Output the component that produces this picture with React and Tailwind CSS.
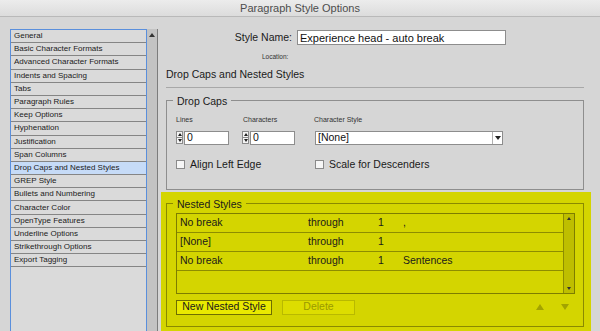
import React from 'react';

const SECTIONS = [
  'General',
  'Basic Character Formats',
  'Advanced Character Formats',
  'Indents and Spacing',
  'Tabs',
  'Paragraph Rules',
  'Keep Options',
  'Hyphenation',
  'Justification',
  'Span Columns',
  'Drop Caps and Nested Styles',
  'GREP Style',
  'Bullets and Numbering',
  'Character Color',
  'OpenType Features',
  'Underline Options',
  'Strikethrough Options',
  'Export Tagging',
];

const NESTED = [
  { style: 'No break', mode: 'through', count: '1', until: ',' },
  { style: '[None]', mode: 'through', count: '1', until: '' },
  { style: 'No break', mode: 'through', count: '1', until: 'Sentences' },
];

function Spinner() {
  return (
    <div className="flex h-[14px] items-center">
      <div className="flex h-[13px] w-[7px] flex-col items-center justify-between border border-[#8a8a8a] bg-[#f4f4f4] py-[1px]">
        <span className="h-0 w-0 border-x-[2.5px] border-b-[3px] border-x-transparent border-b-[#222]" />
        <span className="h-px w-full bg-[#8a8a8a]" />
        <span className="h-0 w-0 border-x-[2.5px] border-t-[3px] border-x-transparent border-t-[#222]" />
      </div>
      <div className="ml-[1px] flex h-[14px] w-[45px] items-center border border-[#8d8d8d] bg-white pl-[2px] text-[10.5px] text-[#111]">
        0
      </div>
    </div>
  );
}

function Checkbox({ label }) {
  return (
    <div className="flex items-center gap-[5px]">
      <span className="h-[9px] w-[9px] border border-[#8a8a8a] bg-[#f6f6f6]" />
      <span className="text-[10.5px] text-[#1a1a1a]">{label}</span>
    </div>
  );
}

export default function App() {
  return (
    <div
      className="h-[331px] w-[600px] overflow-hidden bg-[#d6d6d6] text-[#1a1a1a]"
      style={{ fontFamily: '"Liberation Sans", Arial, sans-serif' }}
    >
      <div className="flex h-[17px] items-center justify-center border-b border-[#b9b9b9] bg-gradient-to-b from-[#ececec] to-[#dcdcdc] text-[11px] text-[#4d4d4d]">
        Paragraph Style Options
      </div>

      <div className="flex items-start">
        {/* section list */}
        <div className="ml-[10px] mt-[12px] flex h-[320px]">
          <div className="w-[137px] border border-[#5a8fdc] bg-[#dadada]">
            {SECTIONS.map((s) => (
              <div
                key={s}
                className={`flex h-[13.2px] items-center border-b border-[#858585] pl-[3px] text-[8px] leading-none text-[#1a1a1a] ${
                  s === 'Drop Caps and Nested Styles' ? 'bg-[#c6dbf7]' : ''
                }`}
              >
                {s}
              </div>
            ))}
          </div>
          <div className="flex w-[11px] justify-center border-r border-[#7c7c7c] bg-[#c3c3c3] pt-[4px]">
            <span className="h-0 w-0 border-x-[3px] border-b-[4px] border-x-transparent border-b-[#333]" />
          </div>
        </div>

        {/* options panel */}
        <div className="ml-[8px] w-[418px]">
          <div className="mt-[13px] flex items-center">
            <span className="w-[126px] text-right text-[10.5px] text-[#1a1a1a]">Style Name:</span>
            <div className="ml-[5px] flex h-[15px] w-[209px] items-center border border-[#8d8d8d] bg-white pl-[2px] text-[11px] text-[#111]">
              Experience head - auto break
            </div>
          </div>
          <div className="mt-[7px] pl-[96px] text-[6.5px] leading-[8px] text-[#333]">Location:</div>
          <div className="mt-[7px] text-[10.5px] leading-[13px] text-[#1a1a1a]">Drop Caps and Nested Styles</div>
          <div className="mt-[6px] h-px w-[418px] bg-[#a8a8a8]" />

          {/* drop caps */}
          <fieldset className="mt-[7px] h-[95px] border border-[#8e8e8e] pl-[9px]">
            <legend className="-ml-[3px] px-[4px] text-[10.5px] leading-[12px] text-[#1a1a1a]">Drop Caps</legend>
            <div className="mt-[8px] flex text-[7px] leading-[9px] text-[#333]">
              <span className="w-[67px]">Lines</span>
              <span className="w-[71px]">Characters</span>
              <span>Character Style</span>
            </div>
            <div className="mt-[7px] flex items-center">
              <div className="w-[66px]">
                <Spinner />
              </div>
              <div className="w-[73px]">
                <Spinner />
              </div>
              <div className="flex h-[14px] w-[188px] items-center border border-[#8d8d8d] bg-white text-[10.5px] text-[#111]">
                <span className="flex-1 pl-[2px]">[None]</span>
                <span className="flex h-full w-[10px] items-center justify-center border-l border-[#b0b0b0]">
                  <span className="h-0 w-0 border-x-[3px] border-t-[4px] border-x-transparent border-t-[#222]" />
                </span>
              </div>
            </div>
            <div className="mt-[12px] flex items-center">
              <div className="w-[139px]">
                <Checkbox label="Align Left Edge" />
              </div>
              <Checkbox label="Scale for Descenders" />
            </div>
          </fieldset>

          {/* nested styles, highlighted */}
          <div className="-ml-[5px] mt-[2px] w-[430px] bg-[#d4d500] pb-[4px] pl-[5px] pr-[7px] pt-[6px]">
            <fieldset className="h-[129px] border border-[#8a8a00] pl-[9px] pr-[8px]">
              <legend className="-ml-[3px] px-[4px] text-[10.5px] leading-[12px] text-[#1a1a1a]">Nested Styles</legend>
              <div className="mt-[3px] flex h-[81px] border border-[#7d7d00]">
                <div className="flex-1">
                  {NESTED.map((r, i) => (
                    <div key={i} className="flex h-[19px] items-center border-b border-[#8d8d00] text-[10.5px] text-[#1a1a1a]">
                      <span className="w-[131px] pl-[3px]">{r.style}</span>
                      <span className="w-[70px]">{r.mode}</span>
                      <span className="w-[25px]">{r.count}</span>
                      <span>{r.until}</span>
                    </div>
                  ))}
                </div>
                <div className="flex w-[11px] flex-col items-center justify-between border-l border-[#8d8d00] bg-[#bebe00] py-[3px]">
                  <span className="h-0 w-0 border-x-[2.5px] border-b-[3px] border-x-transparent border-b-[#333]" />
                  <span className="h-0 w-0 border-x-[2.5px] border-t-[3px] border-x-transparent border-t-[#333]" />
                </div>
              </div>
              <div className="mt-[6px] flex items-center">
                <button className="flex h-[15px] w-[96px] items-center justify-center border border-[#6e6e00] bg-[#e9e900] text-[10.5px] text-[#1a1a1a]">
                  New Nested Style
                </button>
                <button className="ml-[10px] flex h-[15px] w-[73px] items-center justify-center border border-[#b9b900] bg-[#dddd00] text-[10.5px] text-[#9a9a00]">
                  Delete
                </button>
                <div className="ml-auto flex items-center gap-[17px] pr-[6px]">
                  <span className="h-0 w-0 border-x-[4px] border-b-[6px] border-x-transparent border-b-[#a3a300]" />
                  <span className="h-0 w-0 border-x-[4px] border-t-[6px] border-x-transparent border-t-[#a3a300]" />
                </div>
              </div>
            </fieldset>
          </div>
        </div>
      </div>
    </div>
  );
}
